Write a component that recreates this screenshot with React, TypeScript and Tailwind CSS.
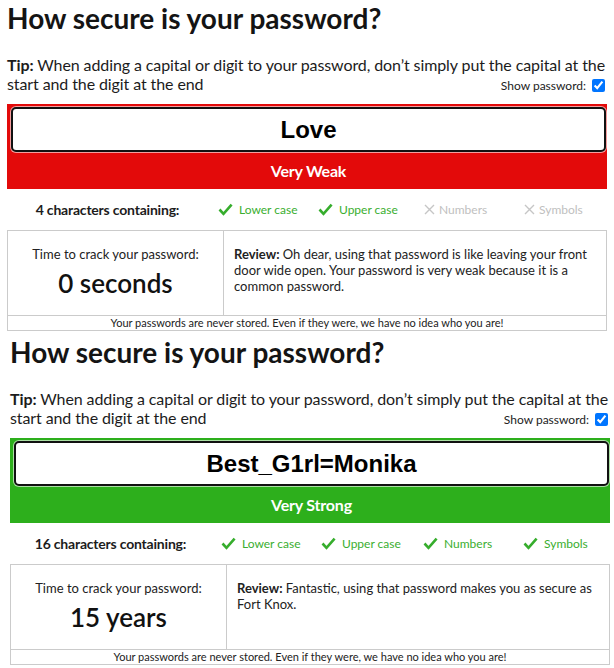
import React from "react";

type Feature = { label: string; ok: boolean };

function CheckIcon() {
  return (
    <svg width="15" height="13" viewBox="0 0 15 13" className="shrink-0">
      <path d="M1.5 6.5 L5.5 10.8 L13.6 1.6" fill="none" stroke="#36ad2c" strokeWidth="2.6" />
    </svg>
  );
}

function CrossIcon() {
  return (
    <svg width="11" height="11" viewBox="0 0 11 11" className="shrink-0 ml-[4px]">
      <path d="M1 1 L10 10 M10 1 L1 10" fill="none" stroke="#c6c6c6" strokeWidth="1.4" />
    </svg>
  );
}

type PanelProps = {
  cls: string;
  pwd: string;
  status: string;
  barCls: string;
  count: string;
  features: Feature[];
  time: string;
  review: string;
};

function Panel({ cls, pwd, status, barCls, count, features, time, review }: PanelProps) {
  return (
    <section className={`w-[600px] h-[333px] ${cls}`}>
      <h1 className="mt-[1px] text-[28px] leading-[34px] font-bold text-[#141414] whitespace-nowrap">
        How secure is your password?
      </h1>
      <p className="mt-[20px] text-[16px] leading-[19px] tracking-[-0.1px] text-[#1c1c1c]">
        <b className="font-bold">Tip:</b> When adding a capital or digit to your password, don’t simply put the capital at the start and the digit at the end
        <span className="float-right flex items-end gap-[6px] h-[19px] mr-[2px] text-[12px] leading-[14px] tracking-normal text-[#222]">
          Show password:
          <input type="checkbox" defaultChecked className="m-0 w-[13px] h-[13px] mb-[1px]" />
        </span>
      </p>
      <div className={`mt-[11px] pt-[3px] pl-[4px] pr-[1px] ${barCls}`}>
        <input
          readOnly
          value={pwd}
          className="block w-full h-[45px] bg-white border-2 border-[#111] rounded-[5px] ring-1 ring-white/60 text-center text-[24px] font-bold text-black font-['Liberation_Sans',Arial,sans-serif] outline-none"
        />
        <div className="h-[37px] flex items-center justify-center text-white font-bold text-[16px] tracking-[-0.2px]">
          {status}
        </div>
      </div>
      <div className="h-[41px] grid grid-cols-[201px_100px_102px_100px_1fr] items-center text-[12px]">
        <div className="text-center font-bold text-[14px] text-[#1c1c1c] tracking-[-0.2px]">{count}</div>
        {features.map((f) => (
          <div key={f.label} className={`flex items-center pl-[10px] ${f.ok ? "gap-[6px] text-[#3aae2f]" : "gap-[4px] text-[#c0c0c0]"}`}>
            {f.ok ? <CheckIcon /> : <CrossIcon />}
            <span>{f.label}</span>
          </div>
        ))}
      </div>
      <div className="border border-[#cbcbcb] text-[#222]">
        <div className="flex h-[85px] border-b border-[#cbcbcb]">
          <div className="w-[216px] shrink-0 border-r border-[#cbcbcb] text-center pt-[15px]">
            <div className="text-[13px] leading-[16px]">Time to crack your password:</div>
            <div className="mt-[6px] text-[26px] leading-[31px] font-semibold text-[#111]">{time}</div>
          </div>
          <div className="flex-1 pt-[15px] pl-[10px] pr-[6px] text-[13px] leading-[16px]">
            <b className="font-bold">Review:</b> {review}
          </div>
        </div>
        <div className="h-[14px] text-center text-[11px] leading-[14px]">
          Your passwords are never stored. Even if they were, we have no idea who you are!
        </div>
      </div>
    </section>
  );
}

export default function App() {
  return (
    <div className="w-[614px] h-[668px] overflow-hidden bg-white font-['Lato','Noto_Sans',sans-serif]">
      <Panel
        cls="ml-[7px]"
        pwd="Love"
        status="Very Weak"
        barCls="bg-[#e30a0a]"
        count="4 characters containing:"
        features={[
          { label: "Lower case", ok: true },
          { label: "Upper case", ok: true },
          { label: "Numbers", ok: false },
          { label: "Symbols", ok: false },
        ]}
        time="0 seconds"
        review="Oh dear, using that password is like leaving your front door wide open. Your password is very weak because it is a common password."
      />
      <Panel
        cls="ml-[10px]"
        pwd="Best_G1rl=Monika"
        status="Very Strong"
        barCls="bg-[#2daf1c]"
        count="16 characters containing:"
        features={[
          { label: "Lower case", ok: true },
          { label: "Upper case", ok: true },
          { label: "Numbers", ok: true },
          { label: "Symbols", ok: true },
        ]}
        time="15 years"
        review="Fantastic, using that password makes you as secure as Fort Knox."
      />
    </div>
  );
}
